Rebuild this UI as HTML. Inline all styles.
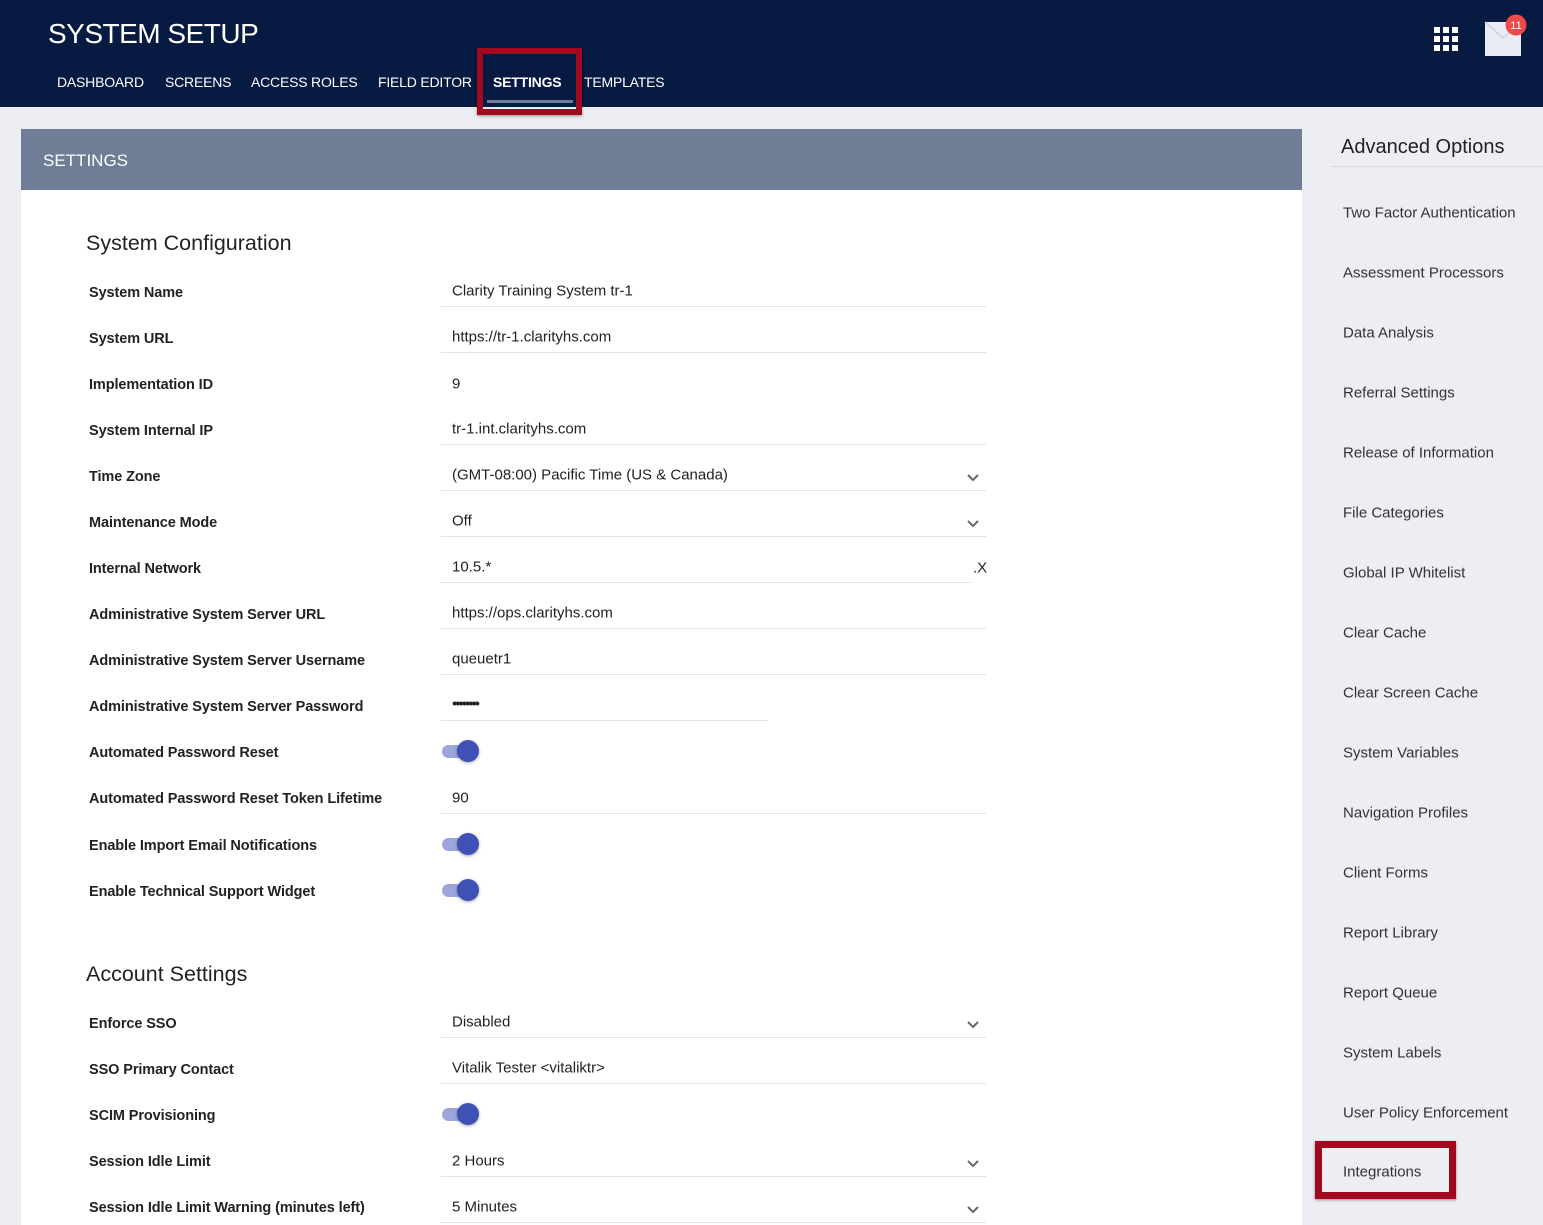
<!DOCTYPE html>
<html><head><meta charset="utf-8"><style>
*{margin:0;padding:0;box-sizing:border-box}
body{width:1543px;height:1225px;overflow:hidden;background:#edeef3;font-family:"Liberation Sans",Arial,sans-serif;position:relative}
.hdr{position:absolute;left:0;top:0;width:1543px;height:107px;background:#061a42}
.title{position:absolute;left:48px;top:18px;color:#fff;font-size:28px;letter-spacing:-0.5px}
.nav{position:absolute;top:74px;color:#fff;font-size:14px;letter-spacing:-0.2px}
.bar{position:absolute;left:21px;top:129px;width:1281px;height:61px;background:#6f7e96;color:#fff;font-size:17px}
.panel{position:absolute;left:21px;top:190px;width:1281px;height:1035px;background:#fff}
.h2{position:absolute;left:86px;font-size:21.5px;color:#222}
.lbl{position:absolute;left:89px;font-size:14.5px;font-weight:bold;color:#222;transform:translateY(-50%);letter-spacing:-0.1px}
.val{position:absolute;left:452px;font-size:15px;color:#222;transform:translateY(-50%)}
.ul{position:absolute;left:441px;width:545px;height:1px;background:#e3e3e3}
.chev{position:absolute;left:966px;width:14px;height:10px}
.tog{position:absolute;left:441px;width:40px;height:26px}
.tog .tr{position:absolute;left:1px;top:7px;width:34px;height:13px;border-radius:7px;background:#9ca5dc}
.tog .kn{position:absolute;left:16px;top:2px;width:22px;height:22px;border-radius:50%;background:#3f51b5;box-shadow:0 1px 3px rgba(0,0,0,.35)}
.side{position:absolute;left:1343px;font-size:15px;color:#333;transform:translateY(-50%)}
</style></head><body>
<div class="hdr"></div>
<div class="title">SYSTEM SETUP</div>
<div class="nav" style="left:57px">DASHBOARD</div>
<div class="nav" style="left:165px">SCREENS</div>
<div class="nav" style="left:251px">ACCESS ROLES</div>
<div class="nav" style="left:378px">FIELD EDITOR</div>
<div style="position:absolute;left:477px;top:48px;width:105px;height:67px;border:6px solid #a10a1e;box-shadow:0 1px 3px rgba(0,0,0,.4)"></div>
<div style="position:absolute;left:487px;top:100px;width:86px;height:3px;background:#6f7e96"></div>
<div class="nav" style="left:493px;font-weight:bold">SETTINGS</div>
<div class="nav" style="left:584px">TEMPLATES</div>
<svg style="position:absolute;left:1434px;top:27px" width="24" height="24"><g fill="#fff">
<rect x="0" y="0" width="6" height="6"/><rect x="9" y="0" width="6" height="6"/><rect x="18" y="0" width="6" height="6"/>
<rect x="0" y="9" width="6" height="6"/><rect x="9" y="9" width="6" height="6"/><rect x="18" y="9" width="6" height="6"/>
<rect x="0" y="18" width="6" height="6"/><rect x="9" y="18" width="6" height="6"/><rect x="18" y="18" width="6" height="6"/></g></svg>
<svg style="position:absolute;left:1484px;top:14px" width="56" height="44">
<rect x="1" y="8" width="36" height="34" fill="#e9ecf2"/><path d="M1 8 L19 24 L37 8" fill="none" stroke="#cfd3dc" stroke-width="1.5"/>
<circle cx="32" cy="11" r="10.5" fill="#ef4a4a"/><text x="32" y="15" font-size="11" font-family="Liberation Sans" fill="#fff" text-anchor="middle">11</text></svg>

<div class="bar"><span style="position:absolute;left:22px;top:22px">SETTINGS</span></div>
<div class="panel"></div>
<div class="h2" style="top:231px">System Configuration</div>
<div class="h2" style="top:962px">Account Settings</div>

<div class="lbl" style="top:293px">System Name</div><div class="val" style="top:291px">Clarity Training System tr-1</div><div class="ul" style="top:306px"></div>
<div class="lbl" style="top:339px">System URL</div><div class="val" style="top:337px">https://tr-1.clarityhs.com</div><div class="ul" style="top:352px"></div>
<div class="lbl" style="top:385px">Implementation ID</div><div class="val" style="top:384px">9</div>
<div class="lbl" style="top:431px">System Internal IP</div><div class="val" style="top:429px">tr-1.int.clarityhs.com</div><div class="ul" style="top:444px"></div>
<div class="lbl" style="top:477px">Time Zone</div><div class="val" style="top:475px">(GMT-08:00) Pacific Time (US &amp; Canada)</div><div class="ul" style="top:490px"></div>
<div class="lbl" style="top:523px">Maintenance Mode</div><div class="val" style="top:521px">Off</div><div class="ul" style="top:536px"></div>
<div class="lbl" style="top:569px">Internal Network</div><div class="val" style="top:567px">10.5.*</div><div class="ul" style="top:582px;width:530px"></div><div class="val" style="top:568px;left:973px">.X</div>
<div class="lbl" style="top:615px">Administrative System Server URL</div><div class="val" style="top:613px">https://ops.clarityhs.com</div><div class="ul" style="top:628px"></div>
<div class="lbl" style="top:661px">Administrative System Server Username</div><div class="val" style="top:659px">queuetr1</div><div class="ul" style="top:674px"></div>
<div class="lbl" style="top:707px">Administrative System Server Password</div><div class="val" style="top:704px;font-size:15px;letter-spacing:-2px">••••••••</div><div class="ul" style="top:720px;width:327px"></div>
<div class="lbl" style="top:753px">Automated Password Reset</div><div class="tog" style="top:738px"><div class="tr"></div><div class="kn"></div></div>
<div class="lbl" style="top:799px">Automated Password Reset Token Lifetime</div><div class="val" style="top:798px">90</div><div class="ul" style="top:813px"></div>
<div class="lbl" style="top:846px">Enable Import Email Notifications</div><div class="tog" style="top:831px"><div class="tr"></div><div class="kn"></div></div>
<div class="lbl" style="top:892px">Enable Technical Support Widget</div><div class="tog" style="top:877px"><div class="tr"></div><div class="kn"></div></div>

<div class="lbl" style="top:1024px">Enforce SSO</div><div class="val" style="top:1022px">Disabled</div><div class="ul" style="top:1037px"></div>
<div class="lbl" style="top:1070px">SSO Primary Contact</div><div class="val" style="top:1068px">Vitalik Tester &lt;vitaliktr&gt;</div><div class="ul" style="top:1083px"></div>
<div class="lbl" style="top:1116px">SCIM Provisioning</div><div class="tog" style="top:1101px"><div class="tr"></div><div class="kn"></div></div>
<div class="lbl" style="top:1162px">Session Idle Limit</div><div class="val" style="top:1161px">2 Hours</div><div class="ul" style="top:1176px"></div>
<div class="lbl" style="top:1208px">Session Idle Limit Warning (minutes left)</div><div class="val" style="top:1207px">5 Minutes</div><div class="ul" style="top:1222px"></div>

<svg class="chev" style="top:473px" viewBox="0 0 14 10"><path d="M2 2 L7 7 L12 2" fill="none" stroke="#666" stroke-width="2"/></svg>
<svg class="chev" style="top:519px" viewBox="0 0 14 10"><path d="M2 2 L7 7 L12 2" fill="none" stroke="#666" stroke-width="2"/></svg>
<svg class="chev" style="top:1020px" viewBox="0 0 14 10"><path d="M2 2 L7 7 L12 2" fill="none" stroke="#666" stroke-width="2"/></svg>
<svg class="chev" style="top:1159px" viewBox="0 0 14 10"><path d="M2 2 L7 7 L12 2" fill="none" stroke="#666" stroke-width="2"/></svg>
<svg class="chev" style="top:1205px" viewBox="0 0 14 10"><path d="M2 2 L7 7 L12 2" fill="none" stroke="#666" stroke-width="2"/></svg>

<div style="position:absolute;left:1341px;top:136px;font-size:20px;color:#222">Advanced Options</div>
<div style="position:absolute;left:1330px;top:166px;width:213px;height:1px;background:#d8d9de"></div>
<div class="side" style="top:213px">Two Factor Authentication</div>
<div class="side" style="top:273px">Assessment Processors</div>
<div class="side" style="top:333px">Data Analysis</div>
<div class="side" style="top:393px">Referral Settings</div>
<div class="side" style="top:453px">Release of Information</div>
<div class="side" style="top:513px">File Categories</div>
<div class="side" style="top:573px">Global IP Whitelist</div>
<div class="side" style="top:633px">Clear Cache</div>
<div class="side" style="top:693px">Clear Screen Cache</div>
<div class="side" style="top:753px">System Variables</div>
<div class="side" style="top:813px">Navigation Profiles</div>
<div class="side" style="top:873px">Client Forms</div>
<div class="side" style="top:933px">Report Library</div>
<div class="side" style="top:993px">Report Queue</div>
<div class="side" style="top:1053px">System Labels</div>
<div class="side" style="top:1113px">User Policy Enforcement</div>
<div style="position:absolute;left:1315px;top:1141px;width:141px;height:58px;border:7px solid #a10a1e;box-shadow:0 1px 3px rgba(0,0,0,.4)"></div>
<div class="side" style="top:1172px">Integrations</div>
</body></html>
